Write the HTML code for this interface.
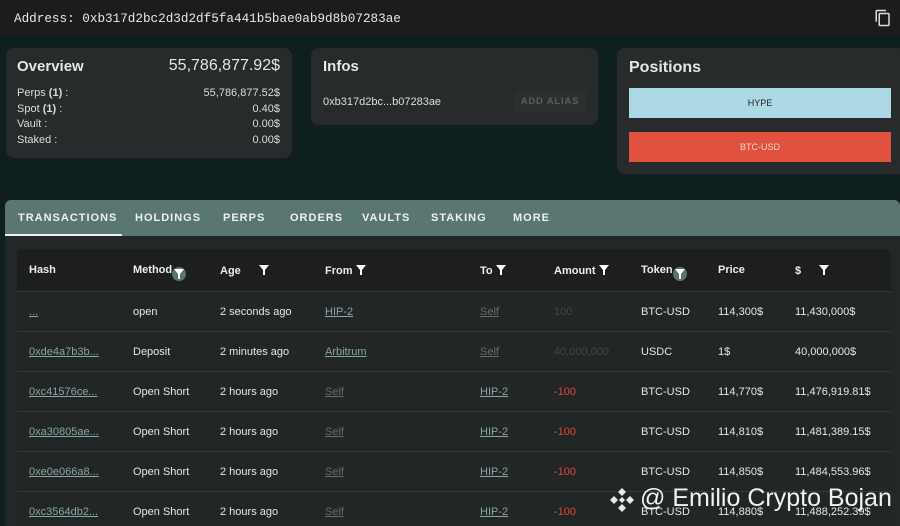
<!DOCTYPE html>
<html><head><meta charset="utf-8"><style>
*{margin:0;padding:0;box-sizing:border-box}
body{width:900px;height:526px;overflow:hidden;background:#0f1f1f;font-family:"Liberation Sans",sans-serif;color:#e6e6e6;position:relative}
.abs{position:absolute}
.addr{left:0;top:0;width:900px;height:36px;background:#1b1d1d;font-family:"Liberation Mono",monospace;font-size:12.65px;color:#e8e8e8;padding:11px 14px}
.card{background:#272b2b;border-radius:8px}
.lbl{font-size:11px;color:#ddd}
.tabs{left:5px;top:200px;width:895px;height:36px;background:#5a7670;border-radius:6px 6px 0 0}
.tab{position:absolute;top:12px;font-size:11px;font-weight:bold;letter-spacing:1px;color:#f0f0f0}
.content{left:5px;top:236px;width:895px;height:290px;background:#222727}
.tbl{left:17px;top:249px;width:874px;height:277px;background:#232627;border-radius:6px 6px 0 0;overflow:hidden}
.th{position:absolute;left:0;top:0;width:874px;height:42px;background:#1d1e1e}
.th .cell{font-weight:bold;color:#eee;top:15px}
.cell{position:absolute;font-size:11px;white-space:nowrap}
.row{position:absolute;left:0;width:874px;height:40px;border-top:1px solid #343a3a}
a{color:#86a8a0;text-decoration:underline}
.dim{color:#5f6e6a}
.red{color:#d9493b}
svg.f{vertical-align:-2px;margin-left:2px}
.fc{display:inline-block;width:14px;height:14px;border-radius:50%;background:#5a7670;vertical-align:-3px;text-align:center}
.fc svg.f{margin:1px 0 0 0;vertical-align:top}
</style></head><body>
<div class="abs addr">Address: 0xb317d2bc2d3d2df5fa441b5bae0ab9d8b07283ae</div>
<svg class="abs" style="left:874px;top:9px" width="18" height="18" viewBox="0 0 24 24"><path fill="#ddd" d="M16 1H4c-1.1 0-2 .9-2 2v14h2V3h12V1zm3 4H8c-1.1 0-2 .9-2 2v14c0 1.1.9 2 2 2h11c1.1 0 2-.9 2-2V7c0-1.1-.9-2-2-2zm0 16H8V7h11v14z"/></svg>

<div class="abs card" style="left:6px;top:48px;width:286px;height:110px">
<div class="abs" style="left:11px;top:10px;font-size:15px;font-weight:bold">Overview</div>
<div class="abs" style="right:12px;top:9px;font-size:16px">55,786,877.92$</div>
<div class="abs lbl" style="left:11px;top:38px;line-height:15.5px">Perps <b>(1)</b> :<br>Spot <b>(1)</b> :<br>Vault :<br>Staked :</div>
<div class="abs lbl" style="right:12px;top:38px;line-height:15.5px;text-align:right">55,786,877.52$<br>0.40$<br>0.00$<br>0.00$</div>
</div>
<div class="abs card" style="left:311px;top:48px;width:287px;height:77px">
<div class="abs" style="left:12px;top:10px;font-size:15px;font-weight:bold">Infos</div>
<div class="abs lbl" style="left:12px;top:48px">0xb317d2bc...b07283ae</div>
<div class="abs" style="left:203px;top:44px;width:72px;height:20px;background:#2c3030;font-size:9.5px;font-weight:bold;color:#56625f;letter-spacing:.8px;text-align:center;line-height:20px">ADD ALIAS</div>
</div>
<div class="abs card" style="left:617px;top:48px;width:290px;height:126px">
<div class="abs" style="left:12px;top:11px;font-size:16px;font-weight:bold">Positions</div>
<div class="abs" style="left:12px;top:40px;width:262px;height:30px;background:#add8e6;color:#222;font-size:9px;text-align:center;line-height:30px">HYPE</div>
<div class="abs" style="left:12px;top:84px;width:262px;height:30px;background:#e05140;color:#f3d3cf;font-size:9px;text-align:center;line-height:30px">BTC-USD</div>
</div>

<div class="abs tabs">
<span class="tab" style="left:13px">TRANSACTIONS</span>
<span class="tab" style="left:130px">HOLDINGS</span>
<span class="tab" style="left:218px">PERPS</span>
<span class="tab" style="left:285px">ORDERS</span>
<span class="tab" style="left:357px">VAULTS</span>
<span class="tab" style="left:426px">STAKING</span>
<span class="tab" style="left:508px">MORE</span>
<div class="abs" style="left:0;top:34px;width:117px;height:2px;background:#f0f0f0"></div>
</div>
<div class="abs content"></div>
<div class="abs tbl">
<div class="th">
<span class="cell" style="left:12px">Hash</span>
<span class="cell" style="left:116px">Method<span class="fc"><svg class="f" width="12" height="12" viewBox="0 0 12 12"><path fill="#fff" d="M1 1h10L7 6v5H5V6z"/></svg></span></span>
<span class="cell" style="left:203px">Age &nbsp; &nbsp; <svg class="f" width="12" height="12" viewBox="0 0 12 12"><path fill="#fff" d="M1 1h10L7 6v5H5V6z"/></svg></span>
<span class="cell" style="left:308px">From<svg class="f" width="12" height="12" viewBox="0 0 12 12"><path fill="#fff" d="M1 1h10L7 6v5H5V6z"/></svg></span>
<span class="cell" style="left:463px">To<svg class="f" width="12" height="12" viewBox="0 0 12 12"><path fill="#fff" d="M1 1h10L7 6v5H5V6z"/></svg></span>
<span class="cell" style="left:537px">Amount<svg class="f" width="12" height="12" viewBox="0 0 12 12"><path fill="#fff" d="M1 1h10L7 6v5H5V6z"/></svg></span>
<span class="cell" style="left:624px">Token<span class="fc"><svg class="f" width="12" height="12" viewBox="0 0 12 12"><path fill="#fff" d="M1 1h10L7 6v5H5V6z"/></svg></span></span>
<span class="cell" style="left:701px">Price</span>
<span class="cell" style="left:778px">$ &nbsp; &nbsp; <svg class="f" width="12" height="12" viewBox="0 0 12 12"><path fill="#fff" d="M1 1h10L7 6v5H5V6z"/></svg></span>
</div>
<div class="row" style="top:42px"><span class="cell" style="left:12px;top:14px"><a>...</a></span><span class="cell" style="left:116px;top:14px">open</span><span class="cell" style="left:203px;top:14px">2 seconds ago</span><span class="cell" style="left:308px;top:14px"><a>HIP-2</a></span><span class="cell" style="left:463px;top:14px"><a class="dim">Self</a></span><span class="cell" style="left:537px;top:14px;color:#3e4a47">100</span><span class="cell" style="left:624px;top:14px">BTC-USD</span><span class="cell" style="left:701px;top:14px">114,300$</span><span class="cell" style="left:778px;top:14px">11,430,000$</span></div>
<div class="row" style="top:82px"><span class="cell" style="left:12px;top:14px"><a>0xde4a7b3b...</a></span><span class="cell" style="left:116px;top:14px">Deposit</span><span class="cell" style="left:203px;top:14px">2 minutes ago</span><span class="cell" style="left:308px;top:14px"><a>Arbitrum</a></span><span class="cell" style="left:463px;top:14px"><a class="dim">Self</a></span><span class="cell" style="left:537px;top:14px;color:#3e4a47">40,000,000</span><span class="cell" style="left:624px;top:14px">USDC</span><span class="cell" style="left:701px;top:14px">1$</span><span class="cell" style="left:778px;top:14px">40,000,000$</span></div>
<div class="row" style="top:122px"><span class="cell" style="left:12px;top:14px"><a>0xc41576ce...</a></span><span class="cell" style="left:116px;top:14px">Open Short</span><span class="cell" style="left:203px;top:14px">2 hours ago</span><span class="cell" style="left:308px;top:14px"><a class="dim">Self</a></span><span class="cell" style="left:463px;top:14px"><a>HIP-2</a></span><span class="cell red" style="left:537px;top:14px">-100</span><span class="cell" style="left:624px;top:14px">BTC-USD</span><span class="cell" style="left:701px;top:14px">114,770$</span><span class="cell" style="left:778px;top:14px">11,476,919.81$</span></div>
<div class="row" style="top:162px"><span class="cell" style="left:12px;top:14px"><a>0xa30805ae...</a></span><span class="cell" style="left:116px;top:14px">Open Short</span><span class="cell" style="left:203px;top:14px">2 hours ago</span><span class="cell" style="left:308px;top:14px"><a class="dim">Self</a></span><span class="cell" style="left:463px;top:14px"><a>HIP-2</a></span><span class="cell red" style="left:537px;top:14px">-100</span><span class="cell" style="left:624px;top:14px">BTC-USD</span><span class="cell" style="left:701px;top:14px">114,810$</span><span class="cell" style="left:778px;top:14px">11,481,389.15$</span></div>
<div class="row" style="top:202px"><span class="cell" style="left:12px;top:14px"><a>0xe0e066a8...</a></span><span class="cell" style="left:116px;top:14px">Open Short</span><span class="cell" style="left:203px;top:14px">2 hours ago</span><span class="cell" style="left:308px;top:14px"><a class="dim">Self</a></span><span class="cell" style="left:463px;top:14px"><a>HIP-2</a></span><span class="cell red" style="left:537px;top:14px">-100</span><span class="cell" style="left:624px;top:14px">BTC-USD</span><span class="cell" style="left:701px;top:14px">114,850$</span><span class="cell" style="left:778px;top:14px">11,484,553.96$</span></div>
<div class="row" style="top:242px"><span class="cell" style="left:12px;top:14px"><a>0xc3564db2...</a></span><span class="cell" style="left:116px;top:14px">Open Short</span><span class="cell" style="left:203px;top:14px">2 hours ago</span><span class="cell" style="left:308px;top:14px"><a class="dim">Self</a></span><span class="cell" style="left:463px;top:14px"><a>HIP-2</a></span><span class="cell red" style="left:537px;top:14px">-100</span><span class="cell" style="left:624px;top:14px">BTC-USD</span><span class="cell" style="left:701px;top:14px">114,880$</span><span class="cell" style="left:778px;top:14px">11,488,252.39$</span></div>
</div>
<svg class="abs" style="left:608px;top:486px" width="28" height="28" viewBox="0 0 28 28" fill="#e8e8e8"><path d="M14 2l4 4-4 4-4-4zM6 10l4 4-4 4-4-4zM22 10l4 4-4 4-4-4zM14 18l4 4-4 4-4-4zM14 11l3 3-3 3-3-3z"/></svg>
<div class="abs" style="left:640px;top:484px;font-size:25px;color:#f2f2f2;white-space:nowrap">@ Emilio Crypto Bojan</div>
</body></html>
